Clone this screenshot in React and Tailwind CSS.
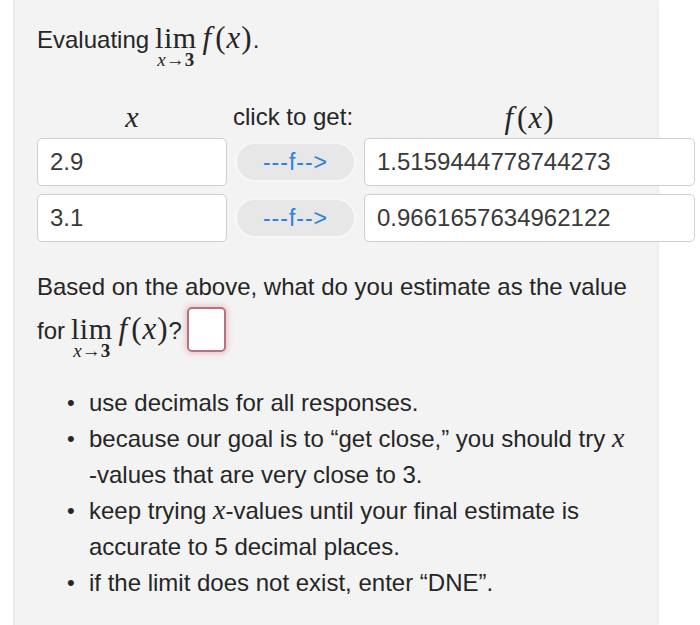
import React from "react";

const serif = { fontFamily: '"Liberation Serif", "DejaVu Serif", serif' };

function MathX({ className = "text-[30px]" }) {
  return (
    <span className={"italic leading-none " + className} style={serif}>
      x
    </span>
  );
}

function FX() {
  return (
    <span className="text-[31px] leading-none tracking-[1px]" style={serif}>
      <span className="italic pr-[3px]">f</span>(<span className="italic">x</span>)
    </span>
  );
}

function Lim() {
  return (
    <span className="inline-flex flex-col items-center mx-[6px]" style={serif}>
      <span className="text-[30px] leading-[32px] tracking-[0.5px]">lim</span>
      <span className="text-[19px] leading-[16px] -mt-[2px]">
        <span className="italic">x</span>→<span className="font-bold">3</span>
      </span>
    </span>
  );
}

function Row({ x, y }) {
  return (
    <>
      <div className="h-[48px] bg-white border border-[#cfcfcf] rounded-[5px] flex items-center pl-[12px] text-[#3a3a3a]">
        {x}
      </div>
      <div className="h-[48px] flex items-center">
        <div className="h-[40px] w-full rounded-full bg-[#e7e7e7] border-2 border-[#f7f7f7] flex items-center justify-center text-[#2f7fdc] text-[23px] tracking-[1px]">
          ---f--&gt;
        </div>
      </div>
      <div className="h-[48px] bg-white border border-[#cfcfcf] rounded-[5px] flex items-center pl-[12px] text-[#3a3a3a]">
        {y}
      </div>
    </>
  );
}

export default function App() {
  return (
    <div
      className="w-[700px] h-[625px] bg-white overflow-hidden text-[24px] text-[#262626]"
      style={{ fontFamily: '"Liberation Sans", Arial, sans-serif' }}
    >
      <div className="ml-[13px] w-[644px] min-h-[625px] bg-[#f3f3f3] border-l-2 border-[#e9e9e9] shadow-[2px_0_2px_rgba(0,0,0,0.08)] pl-[22px] pt-[22px]">
        <div className="leading-[36px] flex items-baseline">
          <span>Evaluating</span>
          <Lim />
          <FX />
          <span>.</span>
        </div>

        <div className="mt-[36px] grid grid-cols-[190px_121px_331px] gap-x-[8px] gap-y-[8px] items-center">
          <div className="flex justify-center h-[26px] items-center">
            <MathX />
          </div>
          <div className="h-[26px] flex items-center -ml-[2px] whitespace-nowrap">click to get:</div>
          <div className="flex justify-center h-[26px] items-center">
            <FX />
          </div>
          <Row x="2.9" y="1.5159444778744273" />
          <Row x="3.1" y="0.9661657634962122" />
        </div>

        <div className="mt-[23px] leading-[44px] pr-[20px]">
          <div>Based on the above, what do you estimate as the value</div>
          <div className="flex items-baseline">
            <span>for</span>
            <Lim />
            <FX />
            <span>?</span>
            <span className="ml-[5px] inline-block w-[39px] h-[45px] bg-white border-2 border-[#b47383] rounded-[5px] shadow-[0_0_5px_2px_rgba(230,120,120,0.35)] self-start -mt-[2px]"></span>
          </div>
        </div>

        <ul className="mt-[26px] ml-[30px] leading-[36px]">
          <li className="flex">
            <span className="w-[22px] shrink-0 text-[22px]">•</span>
            <span>use decimals for all responses.</span>
          </li>
          <li className="flex">
            <span className="w-[22px] shrink-0 text-[22px]">•</span>
            <span>
              because our goal is to “get close,” you should try <MathX className="text-[28px]" />
              <br />
              -values that are very close to 3.
            </span>
          </li>
          <li className="flex">
            <span className="w-[22px] shrink-0 text-[22px]">•</span>
            <span>
              keep trying <MathX className="text-[28px]" />-values until your final estimate is
              <br />
              accurate to 5 decimal places.
            </span>
          </li>
          <li className="flex">
            <span className="w-[22px] shrink-0 text-[22px]">•</span>
            <span>if the limit does not exist, enter “DNE”.</span>
          </li>
        </ul>
      </div>
    </div>
  );
}
